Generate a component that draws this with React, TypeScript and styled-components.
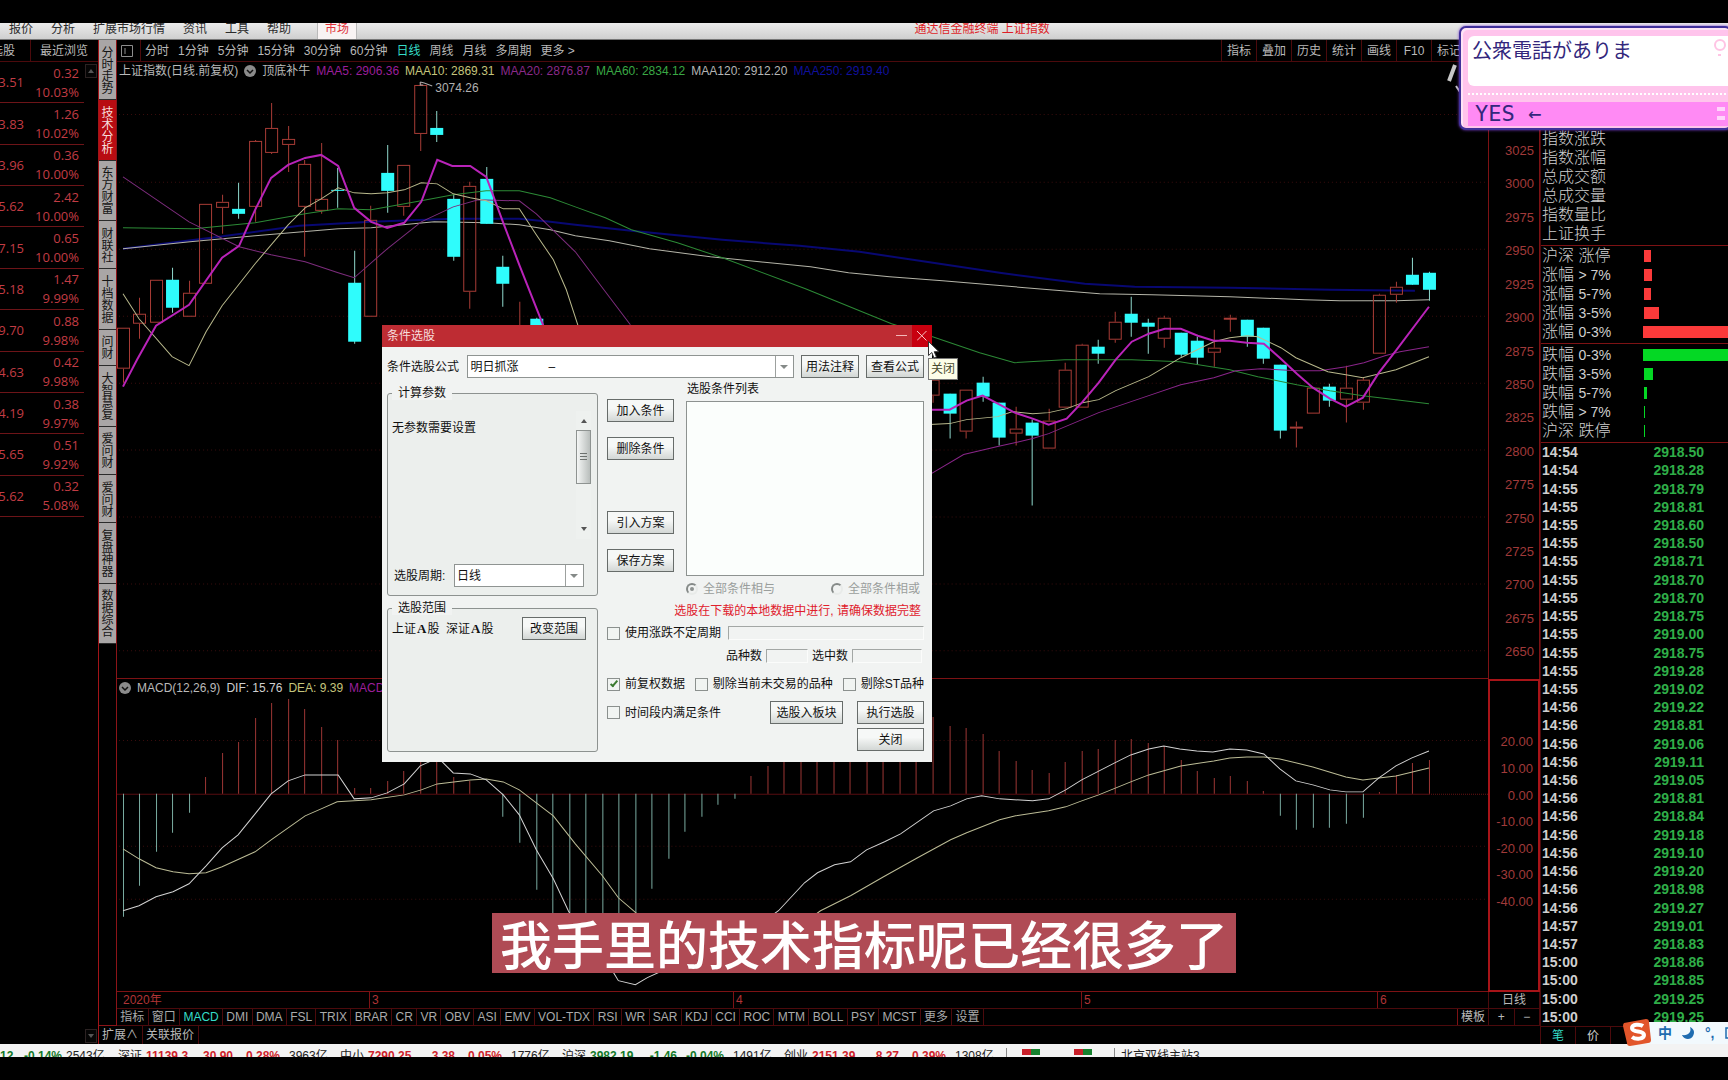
import React from "react";
import styled, { createGlobalStyle, css } from "styled-components";

const sans = `"Liberation Sans", "Noto Sans CJK SC", sans-serif`;
const line = "#7d1214";
const dimLine = "#4c0a0c";
const cyan = "#2ffcfc";

const Global = createGlobalStyle`
  *, *::before, *::after { box-sizing: border-box; }
  body { margin: 0; background: #000; }
  button, select, input { font: inherit; color: inherit; margin: 0; }
`;

const Page = styled.div`
  position: relative;
  display: flex;
  flex-direction: column;
  height: 100vh;
  min-height: 1000px;
  padding: 23px 0;
  overflow: hidden;
  background: #000;
  color: #b9b9b9;
  font: 12px/16px ${sans};
  white-space: nowrap;
`;

const MenuBar = styled.header`
  flex: none;
  display: flex;
  align-items: flex-end;
  height: 17px;
  padding-right: 121px;
  overflow: hidden;
  background: linear-gradient(#ebebeb, #cfcfcf);
  border-bottom: 1px solid #777;
  color: #2b2b2b;
`;
const MenuItems = styled.nav`
  display: flex;
  gap: 18px;
  padding: 0 26px 2px 9px;
`;
const PlainButton = styled.button`
  border: 0;
  padding: 0;
  background: none;
  line-height: 16px;
`;
const MarketTab = styled(PlainButton)`
  padding: 0 7px 2px;
  background: #f8f3f3;
  border: solid #b9b9b9;
  border-width: 0 1px;
  color: #e0323a;
`;
const WindowTitle = styled.div`
  flex: 1;
  padding-bottom: 2px;
  text-align: center;
  color: #dd1f28;
`;

const Main = styled.main`
  flex: 1;
  min-height: 0;
  display: flex;
`;

const ListPanel = styled.section`
  flex: none;
  width: 98px;
  display: flex;
  flex-direction: column;
`;
const ListTabs = styled.div`
  flex: none;
  display: flex;
  height: 22px;
  overflow: hidden;
  border-bottom: 1px solid ${dimLine};
`;
const ListTab = styled(PlainButton)<{ $w: number }>`
  width: ${(p) => p.$w}px;
  display: flex;
  justify-content: flex-end;
  align-items: center;
  padding-right: ${(p) => (p.$w > 40 ? 10 : 15)}px;
  border-right: ${(p) => (p.$w > 40 ? "0" : `1px solid ${dimLine}`)};
`;
const ListBody = styled.div`
  flex: 1;
  display: flex;
  justify-content: space-between;
  align-items: flex-start;
`;
const StockTable = styled.table`
  width: 84px;
  height: 455px;
  border-collapse: collapse;
  table-layout: fixed;
  font: 13px/19px "Open Sans", sans-serif;
  color: #c23c44;
  td { padding: 1px 5px 0 0; text-align: right; border-bottom: 1px solid #6d1418; }
  td:first-child { width: 29px; direction: rtl; overflow: hidden; }
`;
const ScrollCol = styled.div`
  display: flex;
  flex-direction: column;
  justify-content: space-between;
  height: 100%;
  width: 12px;
  margin-right: 1px;
  padding: 2px 0 1px;
`;
const ScrollStep = styled.button<{ $down?: boolean }>`
  display: grid;
  place-items: center;
  width: 12px;
  height: 14px;
  padding: 0;
  background: #050505;
  border: 1px solid #2b2222;
  &::before {
    content: "";
    border: 3px solid transparent;
    ${(p) => (p.$down ? "border-top: 4px solid #555; border-bottom: 0;" : "border-bottom: 4px solid #555; border-top: 0;")}
  }
`;

const Center = styled.section`
  flex: 1;
  min-width: 0;
  display: flex;
  flex-direction: column;
  border-left: 1px solid #a01418;
`;
const Upper = styled.div`
  flex: 1;
  min-height: 0;
  display: flex;
`;
const SideTabs = styled.nav`
  flex: none;
  width: 18px;
  border-right: 1px solid #8c1418;
  border-bottom: 1px solid #8c1418;
`;
const SideTabList = styled.div`
  display: flex;
  flex-direction: column;
  height: 604px;
`;
const SideTab = styled.button<{ $on?: boolean }>`
  flex: 1 1 auto;
  width: 17px;
  padding: 4px 0;
  border: 0;
  border-bottom: 1px solid #2b2b2b;
  background: ${(p) => (p.$on ? "#b80c12" : "#a9a6a6")};
  color: ${(p) => (p.$on ? "#f6dede" : "#151515")};
  writing-mode: vertical-rl;
  text-orientation: upright;
  text-align: center;
  font-family: "Noto Sans CJK SC", sans-serif;
  line-height: 17px;
`;

const ChartArea = styled.div`
  flex: 1;
  min-width: 0;
  display: flex;
  flex-direction: column;
`;
const Toolbar = styled.div`
  flex: none;
  display: flex;
  align-items: center;
  height: 22px;
  border-bottom: 1px solid ${dimLine};
`;
const PaneToggle = styled.button`
  display: grid;
  place-items: center;
  width: 24px;
  height: 21px;
  padding: 0 3px 0 0;
  background: none;
  border: 0;
  border-right: 1px solid ${dimLine};
  color: #8d8d8d;
`;
const Periods = styled.div`
  display: flex;
  gap: 9px;
  padding-left: 4px;
  flex: 1;
`;
const Period = styled(PlainButton)<{ $on?: boolean }>`
  ${(p) => p.$on && css`color: #35dcc8;`}
`;
const Tools = styled.div`
  display: flex;
  align-self: stretch;
  padding-right: 74px;
`;
const Tool = styled.button`
  width: 35px;
  padding: 0;
  background: none;
  border: 0;
  border-left: 1px solid ${dimLine};
`;

const PaneRow = styled.div<{ $grow: number }>`
  flex: ${(p) => p.$grow} 1 0;
  min-height: 0;
  display: flex;
`;
const Pane = styled.div`
  flex: 1;
  min-width: 0;
  display: grid;
  grid-template: minmax(0, 1fr) / minmax(0, 1fr);
  border-bottom: 1px solid ${line};
  > * { grid-area: 1 / 1; }
`;
const Drawing = styled.svg`
  display: block;
  width: 100%;
  height: 100%;
`;
const Legend = styled.div`
  display: flex;
  align-self: start;
  align-items: center;
  gap: 6px;
  padding: 1px 2px;
`;
const Tone = styled.span<{ $c: string }>`
  color: ${(p) => p.$c};
`;
const Axis = styled.div<{ $bright?: boolean; $top: number; $bottom: number }>`
  flex: none;
  width: 52px;
  display: flex;
  flex-direction: column;
  justify-content: space-between;
  padding: ${(p) => p.$top}px 5px ${(p) => p.$bottom}px 0;
  border: solid ${(p) => (p.$bright ? "#a81418" : line)};
  border-width: ${(p) => (p.$bright ? "2px" : "0 1px")};
  text-align: right;
  font-size: 13px;
  line-height: 14px;
  color: #a03a3a;
`;

const DateRow = styled.div`
  flex: none;
  display: flex;
  height: 17px;
  border-bottom: 1px solid ${dimLine};
`;
const Months = styled.div`
  flex: 1;
  display: grid;
  grid-template-columns: 252fr 364fr 348fr 296fr 111fr;
  color: #b03436;
`;
const Month = styled.span`
  padding-left: 2px;
  border-left: 1px solid ${line};
  &:first-child { padding-left: 6px; border: 0; }
`;
const AxisCell = styled.div`
  flex: none;
  width: 52px;
  display: flex;
  justify-content: center;
  border: solid ${dimLine};
  border-width: 0 1px;
`;
const IndicatorRow = styled.div`
  flex: none;
  display: flex;
  justify-content: space-between;
  height: 17px;
  border-bottom: 1px solid ${dimLine};
`;
const Indicators = styled.div`
  display: flex;
  width: 867px;
  margin-right: auto;
`;
const Indicator = styled(PlainButton)<{ $on?: boolean }>`
  flex: 1 1 auto;
  padding: 0 2px;
  border-right: 1px solid ${dimLine};
  color: ${(p) => (p.$on ? "#35dcc8" : "#aaa")};
`;
const TemplateButton = styled(PlainButton)`
  padding: 0 3px;
  border-left: 1px solid ${line};
`;
const ZoomButton = styled(PlainButton)`
  flex: 1;
  & + & { border-left: 1px solid ${dimLine}; }
`;
const FootRow = styled.div`
  flex: none;
  display: flex;
  height: 18px;
`;
const FootTab = styled(PlainButton)`
  padding: 0 4px 0 3px;
  border-right: 1px solid ${dimLine};
`;

const Quote = styled.aside`
  flex: none;
  width: 188px;
  display: flex;
  flex-direction: column;
  border-left: 1px solid ${dimLine};
  color: #cfcfcf;
`;
const StatBlock = styled.div<{ $top?: number }>`
  flex: none;
  padding: ${(p) => p.$top ?? 0}px 0 2px 1px;
  border-bottom: 1px solid ${line};
  font: 300 16px/19px ${sans};
`;
const StatRow = styled.div`
  display: flex;
  align-items: center;
  height: 19px;
`;
const StatName = styled.span`
  width: 102px;
  b { font-size: 14px; }
`;
const Bar = styled.span<{ $w: number; $c: string }>`
  width: ${(p) => p.$w}px;
  height: 12px;
  background: ${(p) => p.$c};
`;
const Ticks = styled.table`
  flex: 1;
  width: 163px;
  border-collapse: collapse;
  font: bold 14px/18px ${sans};
  td { padding: 0 0 0 1px; }
  td:last-child { text-align: right; color: #2fae48; }
`;
const QuoteTabs = styled.div`
  flex: none;
  display: flex;
  height: 18px;
  border-top: 1px solid ${dimLine};
`;
const QuoteTab = styled(PlainButton)<{ $on?: boolean }>`
  width: 35px;
  border-right: 1px solid ${dimLine};
  ${(p) => p.$on && css`color: #35dcc8;`}
`;

const StatusBar = styled.footer`
  flex: none;
  display: flex;
  align-items: flex-start;
  height: 13px;
  padding-top: 4px;
  overflow: hidden;
  background: #f3f3f3;
  color: #222;
`;
const FirstIndex = styled.div`
  flex: none;
  display: grid;
  grid-template-columns: 11px 51px 56px;
  text-align: right;
  span:last-child { padding-left: 4px; text-align: left; }
`;
const IndexQuote = styled.div`
  flex: none;
  display: grid;
  grid-template-columns: 28px 47px 40px 47px 60px;
  b:nth-of-type(n + 2) { text-align: right; }
  span:last-child { padding-left: 9px; }
`;
const Move = styled.b<{ $up?: boolean }>`
  color: ${(p) => (p.$up ? "#cf1f2c" : "#137a2a")};
`;
const Lights = styled.div`
  flex: none;
  display: flex;
  gap: 34px;
  width: 109px;
  height: 16px;
  padding: 1px 0 0 15px;
  border: solid #8a8a8a;
  border-width: 0 1px;
`;
const Light = styled.span`
  width: 18px;
  height: 6px;
  background: linear-gradient(90deg, #c9202a 50%, #16812e 50%);
`;
const Server = styled.span`
  padding-left: 6px;
`;

const Dialog = styled.section`
  position: absolute;
  left: 382px;
  top: 325px;
  width: 550px;
  background: #f1f3f2;
  color: #111;
  line-height: 14px;
`;
const DialogHead = styled.header`
  display: flex;
  align-items: center;
  height: 22px;
  padding-left: 5px;
  background: #be2c33;
  color: #f6dcdc;
  h2 { flex: 1; margin: 0; font: 12px/16px ${sans}; }
`;
const HeadButton = styled.button<{ $close?: boolean }>`
  display: grid;
  place-items: center;
  width: 20px;
  height: 22px;
  padding: 0;
  border: 0;
  background: ${(p) => (p.$close ? "#c8000f" : "none")};
`;
const DialogBody = styled.div`
  padding: 8px 8px 10px 5px;
`;
const FormulaRow = styled.div`
  display: flex;
  align-items: center;
  gap: 7px;
  > label { width: 74px; }
`;
const SelectBox = styled.span<{ $w: number }>`
  position: relative;
  display: block;
  width: ${(p) => p.$w}px;
  height: 23px;
  background: #fff;
  border: 1px solid #8f9492;
  select {
    width: 100%;
    height: 100%;
    padding: 0 2px;
    appearance: none;
    border: 0;
    background: none;
  }
  &::after {
    content: "";
    position: absolute;
    right: 5px;
    top: 9px;
    border: 4px solid transparent;
    border-top-color: #858a88;
    border-bottom: 0;
  }
  &::before {
    content: "";
    position: absolute;
    right: 17px;
    top: 0;
    bottom: 0;
    border-left: 1px solid #9da19f;
  }
`;
const PushButton = styled.button<{ $w: number }>`
  flex: none;
  width: ${(p) => p.$w}px;
  height: 23px;
  padding: 0;
  border: 1px solid #676c6a;
  background: linear-gradient(#f6f8f7 40%, #d3d7d5);
  line-height: 14px;
`;
const Columns = styled.div`
  display: flex;
  justify-content: space-between;
  margin-top: 8px;
`;
const LeftColumn = styled.div`
  width: 211px;
  display: flex;
  flex-direction: column;
  gap: 5px;
`;
const Group = styled.fieldset<{ $h: number }>`
  height: ${(p) => p.$h}px;
  margin: 0;
  padding: 0 6px 0 4px;
  border: 1px solid #8d9290;
  border-radius: 3px;
  background: #ecefed;
  legend { margin-left: 0; padding: 0 6px; line-height: 14px; background: #f1f3f2; }
`;
const ParamArea = styled.div`
  display: flex;
  justify-content: space-between;
  height: 128px;
  margin-top: 11px;
  p { margin: 10px 0 0; }
`;
const ParamScroll = styled.div`
  display: flex;
  flex-direction: column;
  align-items: center;
  width: 15px;
  background: #eef1ef;
`;
const Thumb = styled.span`
  width: 15px;
  height: 56px;
  margin-bottom: 36px;
  display: grid;
  place-items: center;
  border: 1px solid #8e9391;
  background: linear-gradient(90deg, #f4f6f5, #b9bebc);
  &::before { content: ""; width: 7px; height: 8px; background: repeating-linear-gradient(#6c716f 0 1px, transparent 1px 3px); }
`;
const Step = styled(ScrollStep)`
  width: 15px;
  height: 20px;
  border: 0;
  background: none;
`;
const PeriodRow = styled.div`
  display: flex;
  align-items: center;
  justify-content: space-between;
  margin-top: 25px;
  padding: 0 7px 0 2px;
`;
const RangeRow = styled.div`
  display: flex;
  justify-content: space-between;
  align-items: center;
  margin-top: 2px;
  padding-right: 5px;
  b { padding: 0 1px; font: bold 13px/14px "Liberation Serif", serif; }
`;
const RightColumn = styled.div`
  width: 317px;
  margin-top: -4px;
`;
const Conditions = styled.div`
  display: flex;
  justify-content: space-between;
`;
const Actions = styled.div`
  display: flex;
  flex-direction: column;
  gap: 15px;
  padding-top: 17px;
  > :nth-child(3) { margin-top: 36px; }
`;
const ConditionList = styled.div`
  width: 238px;
  h3 { margin: 0 0 5px 1px; font: 12px/14px ${sans}; }
`;
const ListBox = styled.div`
  height: 175px;
  background: #fbfefc;
  border: 1px solid #8d9290;
`;
const Line = styled.div<{ $mt: number }>`
  display: flex;
  align-items: center;
  justify-content: space-between;
  margin-top: ${(p) => p.$mt}px;
`;
const Joins = styled(Line)`
  padding: 0 4px 0 79px;
  color: #9a9e9c;
`;
const Warning = styled.p`
  margin: 8px 3px 0 0;
  text-align: right;
  color: #e0202c;
`;
const Choice = styled.label`
  display: flex;
  align-items: center;
  gap: 5px;
  height: 14px;
`;
const Tick = styled.input.attrs({ type: "checkbox" })`
  appearance: none;
  width: 13px;
  height: 13px;
  border: 1px solid #8b908e;
  background: #f1f4f2;
  display: grid;
  place-items: center;
  &:checked::before {
    content: "";
    width: 4px;
    height: 8px;
    margin-bottom: 3px;
    border: solid #3a7a2f;
    border-width: 0 2px 2px 0;
    transform: rotate(40deg);
  }
`;
const Radio = styled.input.attrs({ type: "radio" })`
  appearance: none;
  width: 12px;
  height: 12px;
  border: 2px solid;
  border-color: #858a88 #e8ebe9 #e8ebe9 #858a88;
  border-radius: 50%;
  display: grid;
  place-items: center;
  &:checked::before { content: ""; width: 4px; height: 4px; border-radius: 50%; background: #8d9290; }
`;
const Sunken = styled.output<{ $w: number }>`
  width: ${(p) => p.$w}px;
  height: 14px;
  border: 1px solid;
  border-color: #a3a7a5 #fbfcfb #fbfcfb #a3a7a5;
`;
const EndLine = styled(Line)<{ $gap: number }>`
  justify-content: flex-end;
  gap: ${(p) => p.$gap}px;
  > :first-child:not(:only-child) { margin-right: auto; }
`;
const Counts = styled(Line)`
  justify-content: flex-end;
  gap: 4px;
  padding-right: 2px;
`;

const Tip = styled.div`
  position: absolute;
  left: 928px;
  top: 358px;
  padding: 2px 2px;
  border: 1px solid #777;
  background: #fdfde8;
  color: #4a4a30;
`;
const Cursor = styled.svg`
  position: absolute;
  left: 928px;
  top: 341px;
`;
const Caption = styled.div`
  position: absolute;
  left: 50%;
  bottom: 107px;
  transform: translateX(-50%);
  padding: 0 8px;
  background: #b04b55;
  color: #fff;
  font: 500 52px/60px "Noto Sans CJK SC", sans-serif;
`;
const Watermark = styled.svg`
  position: absolute;
  right: 268px;
  top: 64px;
`;
const PhoneCard = styled.section`
  position: absolute;
  right: -4px;
  top: 26px;
  width: 273px;
  height: 104px;
  padding: 8px 0 3px 7px;
  border: 2px solid #40309a;
  border-radius: 7px;
  background: #ffc4ec;
  box-shadow: inset 2px 2px 0 #fde3f6, 0 0 3px #7a3fd0;
  color: #33277c;
`;
const PhoneText = styled.div`
  display: flex;
  justify-content: space-between;
  height: 50px;
  padding: 0 4px 0 4px;
  border-radius: 6px 0 0 6px;
  background: #fff;
  font: 20px/28px "Noto Sans CJK JP", sans-serif;
`;
const Dots = styled.div`
  height: 16px;
  display: flex;
  align-items: center;
  &::before { content: ""; flex: 1; border-top: 2px dotted #fff; }
`;
const YesButton = styled.button`
  display: flex;
  align-items: center;
  justify-content: space-between;
  width: 100%;
  height: 24px;
  padding: 0 5px 0 7px;
  border: 0;
  background: #ff8af4;
  font: 22px/24px "DejaVu Sans Mono", monospace;
`;
const Pips = styled.span`
  width: 8px;
  height: 14px;
  background: repeating-linear-gradient(#ffd5fb 0 4px, transparent 4px 9px);
`;
const ImeBar = styled.div`
  position: absolute;
  right: 0;
  bottom: 36px;
  display: flex;
  align-items: center;
  gap: 10px;
  width: 92px;
  height: 22px;
  padding-left: 22px;
  background: #f2f9fd;
  color: #1f6cb0;
  font-weight: bold;
  font-size: 14px;
  > * { flex: none; }
`;
const ImeLogo = styled.svg`
  position: absolute;
  left: -14px;
  top: -5px;
`;

type Candle = [number, number, number, number, number, number];
// index, falling flag, high, body top, body bottom, low
const candles: Candle[] = [
  [0,0,328,328,369,383],[1,0,298,314,324,339],[2,0,280,280,323,323],[3,1,268,280,308,313],[4,0,281,293,317,317],
  [5,0,204,204,284,284],[6,0,195,202,208,234],[7,1,183,209,214,219],[8,0,140,141,207,222],[9,0,103,128,153,154],
  [10,0,126,139,145,172],[11,0,160,164,207,257],[12,0,143,199,211,214],[13,1,168,190,191,208],[14,1,251,283,342,344],
  [15,0,206,220,317,317],[16,1,145,173,191,213],[17,0,165,165,207,216],[18,0,83,85,134,151],[19,1,111,128,135,142],
  [20,1,195,199,257,261],[21,0,182,186,292,309],[22,1,167,179,224,224],[23,1,256,267,284,307],[24,0,302,330,350,350],
  [25,1,318,319,340,345],[49,0,380,380,396,403],[50,1,394,394,414,439],[51,0,390,390,432,439],[52,1,377,383,397,402],
  [53,1,403,403,438,446],[54,0,407,429,434,446],[55,1,420,423,436,506],[56,0,409,421,449,449],[57,0,363,370,408,408],
  [58,0,344,345,408,408],[59,1,340,347,354,364],[60,0,312,322,340,343],[61,1,297,314,323,337],[62,1,319,323,327,354],
  [63,0,316,318,339,348],[64,1,333,333,355,357],[65,1,337,341,358,365],[66,0,330,348,353,367],[67,0,315,318,319,332],
  [68,1,320,320,337,347],[69,1,328,328,359,364],[70,1,365,365,431,439],[71,0,422,427,429,448],[72,0,388,388,414,414],
  [73,1,384,387,401,407],[74,0,366,388,400,423],[75,0,378,380,403,410],[76,0,294,295,354,354],[77,0,282,287,295,303],
  [78,1,258,275,285,285],[79,1,272,273,290,301],
];
const xAt = (i: number) => 124.5 + i * 16.52;

const ma5a = "124,387 138,360 157,326 190,305 223,258 240,246 256,210 272,178 289,165 306,158 322,155 339,166 355,208 372,222 388,228 405,223 422,202 438,160 453,166 471,166 487,177 504,223 520,265 544,326";
const ma5b = "930,410 950,410 967,401 983,396 1000,405 1015,413 1033,419 1049,425 1067,419 1083,402 1099,383 1116,360 1132,342 1149,334 1165,329 1181,329 1198,336 1214,341 1230,341 1247,343 1264,344 1281,359 1297,374 1313,388 1330,399 1346,407 1363,398 1379,373 1396,351 1429,307";
const ma10a = "124,294 140,319 173,357 190,366 207,332 223,306 256,264 289,225 306,208 322,199 339,188 355,193 372,194 388,193 405,190 422,183 438,184 454,194 471,198 487,201 504,209 520,209 537,235 554,260 567,290 580,330";
const ma10b = "930,425 950,424 967,420 998,417 1013,412 1033,414 1049,413 1067,409 1083,403 1099,400 1116,391 1149,377 1181,358 1214,342 1230,338 1247,336 1258,337 1281,348 1296,358 1328,372 1346,375 1363,378 1396,370 1429,357";
const ma20a = "124,177 190,222 240,247 272,255 306,262 339,273 355,278 388,249 422,222 454,207 479,200 520,201 537,214 576,252 600,284 631,325";
const ma20b = "930,475 964,455 998,447 1033,439 1049,434 1099,413 1149,396 1181,385 1214,378 1236,371 1261,369 1297,371 1320,371 1346,367 1364,363 1385,356 1400,352 1429,347";
const ma60 = "124,228 195,229 256,223 306,214 339,209 372,210 422,201 454,195 487,191 520,191 551,198 576,207 606,218 632,230 678,243 723,258 806,289 892,324 933,337 980,353 1015,363 1065,360 1132,360 1180,362 1230,370 1258,377 1297,385 1330,391 1363,396 1396,400 1429,404";
const ma120 = "124,249 191,242 256,236 339,229 372,228 435,222 488,223 520,225 551,230 576,236 610,241 650,249 711,257 760,262 811,267 849,273 890,277 943,281 991,285 1050,290 1100,294 1152,295 1230,297 1305,300 1340,301 1396,301 1429,300";
const ma250 = "124,249 220,237 300,226 372,222 454,219 520,219 551,222 576,225 632,231 723,240 800,246 860,252 920,261 1000,273 1085,284 1135,287 1230,288 1330,290 1415,291";

const macdEnds: (number | null)[] = [
  918,887,853,834,814,778,754,743,719,704,700,710,728,741,789,789,782,772,755,755,
  778,782,null,818,844,891,940,940,940,940,940,940,890,860,833,818,806,800,777,767,
  755,750,745,740,735,730,728,725,720,718,727,729,735,752,762,771,774,763,752,750,
  741,740,744,747,761,772,779,777,782,792,817,831,829,829,825,819,793,776,764,761,
];
const dif = "124,912 140,907 157,898 174,893 190,885 207,867 223,849 239,836 256,815 272,795 289,782 306,776 339,776 355,800 372,799 388,794 405,785 421,767 430,763 438,758 443,763 454,774 471,775 487,781 504,796 520,816 537,851 554,880 569,912 590,950 613,972 619,982 636,986 648,979 663,972 720,955 779,912 805,884 818,874 835,866 851,863 867,851 885,843 901,835 934,812 951,807 967,800 982,797 1000,800 1033,802 1049,800 1066,791 1082,781 1115,764 1131,756 1149,750 1164,747 1180,750 1197,752 1213,753 1230,750 1247,751 1264,755 1280,770 1296,782 1313,786 1330,791 1346,793 1363,793 1379,779 1396,767 1412,759 1429,752";
const dea = "124,850 140,860 157,869 174,873 190,875 207,874 223,868 256,853 272,841 306,817 322,810 338,803 372,801 405,796 422,791 438,785 471,781 487,780 504,783 520,791 537,804 554,817 576,845 603,877 619,899 634,912 660,935 720,950 790,935 821,912 835,905 851,897 884,878 918,859 951,841 967,834 1000,821 1016,817 1049,812 1066,808 1082,802 1099,796 1131,783 1149,776 1181,767 1214,762 1230,759 1247,758 1264,758 1280,760 1313,768 1346,778 1363,781 1379,779 1396,777 1429,769";

const stocks = [
  ["3.51","0.32","10.03%"],["3.83","1.26","10.02%"],["3.96","0.36","10.00%"],["5.62","2.42","10.00%"],
  ["7.15","0.65","10.00%"],["5.18","1.47","9.99%"],["9.70","0.88","9.98%"],["4.63","0.42","9.98%"],
  ["4.19","0.38","9.97%"],["5.65","0.51","9.92%"],["5.62","0.32","5.08%"],
];
const sideTabs = ["分时走势","技术分析","东方财富","财联社","十档数据","问财","大智慧复","爱问财","爱问财","复盘神器","数据综合"];
const periods = ["分时","1分钟","5分钟","15分钟","30分钟","60分钟","日线","周线","月线","多周期","更多 >"];
const tools = ["指标","叠加","历史","统计","画线","F10","标记"];
const prices = [3025,3000,2975,2950,2925,2900,2875,2850,2825,2800,2775,2750,2725,2700,2675,2650];
const levels = ["20.00","10.00","0.00","-10.00","-20.00","-30.00","-40.00"];
const indicators = ["指标","窗口","MACD","DMI","DMA","FSL","TRIX","BRAR","CR","VR","OBV","ASI","EMV","VOL-TDX","RSI","WR","SAR","KDJ","CCI","ROC","MTM","BOLL","PSY","MCST","更多","设置"];
const ticks = [
  ["14:54","2918.50"],["14:54","2918.28"],["14:55","2918.79"],["14:55","2918.81"],["14:55","2918.60"],["14:55","2918.50"],
  ["14:55","2918.71"],["14:55","2918.70"],["14:55","2918.70"],["14:55","2918.75"],["14:55","2919.00"],["14:55","2918.75"],
  ["14:55","2919.28"],["14:55","2919.02"],["14:56","2919.22"],["14:56","2918.81"],["14:56","2919.06"],["14:56","2919.11"],
  ["14:56","2919.05"],["14:56","2918.81"],["14:56","2918.84"],["14:56","2919.18"],["14:56","2919.10"],["14:56","2919.20"],
  ["14:56","2918.98"],["14:56","2919.27"],["14:57","2919.01"],["14:57","2918.83"],["15:00","2918.86"],["15:00","2918.85"],
  ["15:00","2919.25"],["15:00","2919.25"],
];
const rises: [string, string, number][] = [["沪深 涨停","",7],["涨幅","> 7%",8],["涨幅","5-7%",7],["涨幅","3-5%",15],["涨幅","0-3%",85]];
const falls: [string, string, number][] = [["跌幅","0-3%",85],["跌幅","3-5%",9],["跌幅","5-7%",3],["跌幅","> 7%",1],["沪深 跌停","",1]];
const indexes: [string, string, string, string, string, boolean][] = [
  ["深证","11139.3","30.90","0.28%","3963亿",true],
  ["中小","7290.25","3.38","0.05%","1776亿",true],
  ["沪深","3982.19","-1.46","-0.04%","1491亿",false],
  ["创业","2151.39","8.27","0.39%","1308亿",true],
];

const Collapse = () => (
  <svg width="12" height="12" viewBox="0 0 12 12">
    <circle cx="6" cy="6" r="6" fill="#8b8b8b" />
    <path d="M3 5l3 3 3-3" fill="none" stroke="#111" strokeWidth="1.5" />
  </svg>
);

const PriceChart = () => (
  <Drawing viewBox="118 62 1370 617" preserveAspectRatio="none">
    {[114, 182, 249, 316, 383, 450, 517, 584, 651].map((y) => (
      <path key={y} d={`M120 ${y}.5H1488`} stroke="#3a0d0d" strokeDasharray="1 3" />
    ))}
    <g fill="none">
      <polyline points={ma250} stroke="#080872" strokeWidth="2" />
      <polyline points={ma120} stroke="#b4b4a8" />
    </g>
    {candles.map(([i, down, high, top, bottom, low]) => {
      const x = Math.round(xAt(i));
      return down ? (
        <g key={i} fill={cyan}>
          <path d={`M${x - 0.5} ${high}V${low}`} stroke="#8fd8cc" />
          <rect x={x - 7} y={top} width="13" height={Math.max(1, bottom - top)} />
        </g>
      ) : (
        <g key={i} fill="none" stroke="#a83c36">
          <path d={`M${x - 0.5} ${high}V${top}M${x - 0.5} ${bottom}V${low}`} />
          <rect x={x - 6.5} y={top + 0.5} width="12" height={Math.max(1, bottom - top - 1)} />
        </g>
      );
    })}
    <g fill="none">
      <polyline points={ma60} stroke="#2c8a36" />
      <polyline points={ma20a} stroke="#7d2c7d" />
      <polyline points={ma20b} stroke="#8a258a" />
      <polyline points={ma10a} stroke="#b9b98c" />
      <polyline points={ma10b} stroke="#b9b98c" />
      <polyline points={ma5a} stroke="#b923b9" strokeWidth="2" />
      <polyline points={ma5b} stroke="#b923b9" strokeWidth="2" />
      <path d="M421 82l4 1 8 3M421 82v3h3" stroke="#aaa" />
    </g>
    <text x="436" y="92" fill="#b0b0b0" fontSize="12">3074.26</text>
  </Drawing>
);

const MacdChart = () => (
  <Drawing viewBox="118 680 1370 312" preserveAspectRatio="none">
    {[741, 847, 900].map((y) => (
      <path key={y} d={`M120 ${y}.5H1488`} stroke="#3a0d0d" strokeDasharray="1 3" />
    ))}
    <path d="M118 795.5H1429" stroke="#570d10" />
    <path d="M1429 795.5H1488" stroke="#6a1214" strokeDasharray="1 1" />
    {macdEnds.map((y, i) =>
      y === null ? null : (
        <path key={i} d={`M${Math.round(xAt(i)) - 0.5} 795V${y}`} stroke={y < 795 ? "#9c3634" : "#79aba0"} />
      )
    )}
    <polyline points={dea} fill="none" stroke="#bcbc96" />
    <polyline points={dif} fill="none" stroke="#d2d2d2" />
  </Drawing>
);

const FormulaDialog = () => (
  <Dialog role="dialog" aria-label="条件选股">
    <DialogHead>
      <h2>条件选股</h2>
      <HeadButton aria-label="最小化">
        <svg width="12" height="10"><path d="M0 4.500H11" stroke="#f3b9b9" /></svg>
      </HeadButton>
      <HeadButton $close aria-label="关闭窗口">
        <svg width="10" height="10"><path d="M0 0l9.500 9.500M9.500 0L0 9.500" stroke="#f8c4c4" /></svg>
      </HeadButton>
    </DialogHead>
    <DialogBody>
      <FormulaRow>
        <label htmlFor="formula">条件选股公式</label>
        <SelectBox $w={329}>
          <select id="formula"><option>{"明日抓涨" + "\u00a0".repeat(9) + "–"}</option></select>
        </SelectBox>
        <PushButton $w={58}>用法注释</PushButton>
        <PushButton $w={58}>查看公式</PushButton>
      </FormulaRow>
      <Columns>
        <LeftColumn>
          <Group $h={210}>
            <legend>计算参数</legend>
            <ParamArea>
              <p>无参数需要设置</p>
              <ParamScroll>
                <Step aria-label="向上" />
                <Thumb />
                <Step $down aria-label="向下" />
              </ParamScroll>
            </ParamArea>
            <PeriodRow>
              <label htmlFor="cycle">选股周期:</label>
              <SelectBox $w={130}>
                <select id="cycle"><option>日线</option></select>
              </SelectBox>
            </PeriodRow>
          </Group>
          <Group $h={151}>
            <legend>选股范围</legend>
            <RangeRow>
              <span>上证<b>A</b>股&nbsp; 深证<b>A</b>股</span>
              <PushButton $w={64}>改变范围</PushButton>
            </RangeRow>
          </Group>
        </LeftColumn>
        <RightColumn>
          <Conditions>
            <Actions>
              <PushButton $w={67}>加入条件</PushButton>
              <PushButton $w={67}>删除条件</PushButton>
              <PushButton $w={67}>引入方案</PushButton>
              <PushButton $w={67}>保存方案</PushButton>
            </Actions>
            <ConditionList>
              <h3>选股条件列表</h3>
              <ListBox />
            </ConditionList>
          </Conditions>
          <Joins $mt={6}>
            <Choice><Radio name="join" defaultChecked disabled />全部条件相与</Choice>
            <Choice><Radio name="join" disabled />全部条件相或</Choice>
          </Joins>
          <Warning>选股在下载的本地数据中进行, 请确保数据完整</Warning>
          <Line $mt={8}>
            <Choice><Tick />使用涨跌不定周期</Choice>
            <Sunken $w={196} />
          </Line>
          <Counts $mt={9}>
            <span>品种数</span><Sunken $w={42} /><span>选中数</span><Sunken $w={70} />
          </Counts>
          <Line $mt={14}>
            <Choice><Tick defaultChecked />前复权数据</Choice>
            <Choice><Tick />剔除当前未交易的品种</Choice>
            <Choice><Tick />剔除ST品种</Choice>
          </Line>
          <EndLine $mt={10} $gap={14}>
            <Choice><Tick />时间段内满足条件</Choice>
            <PushButton $w={73}>选股入板块</PushButton>
            <PushButton $w={67}>执行选股</PushButton>
          </EndLine>
          <EndLine $mt={4} $gap={0}>
            <PushButton $w={67}>关闭</PushButton>
          </EndLine>
        </RightColumn>
      </Columns>
    </DialogBody>
  </Dialog>
);

const Stats = ({ rows, color }: { rows: [string, string, number][]; color: string }) => (
  <>
    {rows.map(([name, range, w]) => (
      <StatRow key={name + range}>
        <StatName>{name} <b>{range}</b></StatName>
        <Bar $w={w} $c={color} />
      </StatRow>
    ))}
  </>
);

export default function App() {
  return (
    <Page>
      <Global />
      <MenuBar>
        <MenuItems>
          {["报价", "分析", "扩展市场行情", "资讯", "工具", "帮助"].map((t) => <PlainButton key={t}>{t}</PlainButton>)}
        </MenuItems>
        <MarketTab>市场</MarketTab>
        <WindowTitle>通达信金融终端 上证指数</WindowTitle>
      </MenuBar>

      <Main>
        <ListPanel>
          <ListTabs>
            <ListTab $w={31}>选股</ListTab>
            <ListTab $w={67}>最近浏览</ListTab>
          </ListTabs>
          <ListBody>
            <StockTable>
              <tbody>
                {stocks.map(([price, change, pct], i) => (
                  <tr key={i}><td>{price}</td><td>{change}<br />{pct}</td></tr>
                ))}
              </tbody>
            </StockTable>
            <ScrollCol>
              <ScrollStep aria-label="上" />
              <ScrollStep $down aria-label="下" />
            </ScrollCol>
          </ListBody>
        </ListPanel>

        <Center>
          <Upper>
            <SideTabs>
              <SideTabList>
                {sideTabs.map((t, i) => <SideTab key={i} $on={i === 1}>{t}</SideTab>)}
              </SideTabList>
            </SideTabs>
            <ChartArea>
              <Toolbar>
                <PaneToggle aria-label="布局">
                  <svg width="12" height="12"><path d="M.5.5h11v11H.5zM4 3v6" fill="none" stroke="currentColor" /></svg>
                </PaneToggle>
                <Periods>
                  {periods.map((t) => <Period key={t} $on={t === "日线"}>{t}</Period>)}
                </Periods>
                <Tools>{tools.map((t) => <Tool key={t}>{t}</Tool>)}</Tools>
              </Toolbar>
              <PaneRow $grow={618}>
                <Pane>
                  <PriceChart />
                  <Legend>
                    <span>上证指数(日线.前复权)</span>
                    <Collapse />
                    <span>顶底补牛</span>
                    <Tone $c="#9a1f9a">MAA5: 2906.36</Tone>
                    <Tone $c="#c4c47c">MAA10: 2869.31</Tone>
                    <Tone $c="#8a2a8a">MAA20: 2876.87</Tone>
                    <Tone $c="#3aa845">MAA60: 2834.12</Tone>
                    <Tone $c="#b4b4b4">MAA120: 2912.20</Tone>
                    <Tone $c="#10109c">MAA250: 2919.40</Tone>
                  </Legend>
                </Pane>
                <Axis $top={82} $bottom={20}>{prices.map((p) => <span key={p}>{p}</span>)}</Axis>
              </PaneRow>
              <PaneRow $grow={313}>
                <Pane>
                  <MacdChart />
                  <Legend>
                    <Collapse />
                    <span>MACD(12,26,9)</span>
                    <Tone $c="#cfcfcf">DIF: 15.76</Tone>
                    <Tone $c="#c4c47c">DEA: 9.39</Tone>
                    <Tone $c="#9a1f9a">MACD: 12.74</Tone>
                  </Legend>
                </Pane>
                <Axis $bright $top={54} $bottom={81}>{levels.map((p) => <span key={p}>{p}</span>)}</Axis>
              </PaneRow>
              <DateRow>
                <Months>{["2020年", "3", "4", "5", "6"].map((m) => <Month key={m}>{m}</Month>)}</Months>
                <AxisCell>日线</AxisCell>
              </DateRow>
              <IndicatorRow>
                <Indicators>
                  {indicators.map((t) => <Indicator key={t} $on={t === "MACD"}>{t}</Indicator>)}
                </Indicators>
                <TemplateButton>模板</TemplateButton>
                <AxisCell><ZoomButton>+</ZoomButton><ZoomButton>−</ZoomButton></AxisCell>
              </IndicatorRow>
            </ChartArea>
          </Upper>
          <FootRow>
            <FootTab>扩展∧</FootTab>
            <FootTab>关联报价</FootTab>
          </FootRow>
        </Center>

        <Quote>
          <StatBlock $top={89}>
            {["指数涨跌", "指数涨幅", "总成交额", "总成交量", "指数量比", "上证换手"].map((t) => <StatRow key={t}>{t}</StatRow>)}
          </StatBlock>
          <StatBlock><Stats rows={rises} color="#fb3a3a" /></StatBlock>
          <StatBlock $top={1}><Stats rows={falls} color="#04d824" /></StatBlock>
          <Ticks>
            <tbody>
              {ticks.map(([time, price], i) => <tr key={i}><td>{time}</td><td>{price}</td></tr>)}
            </tbody>
          </Ticks>
          <QuoteTabs>
            <QuoteTab $on>笔</QuoteTab>
            <QuoteTab>价</QuoteTab>
          </QuoteTabs>
        </Quote>
      </Main>

      <StatusBar>
        <FirstIndex><Move>12</Move><Move>-0.14%</Move><span>2543亿</span></FirstIndex>
        {indexes.map(([name, value, change, pct, vol, up]) => (
          <IndexQuote key={name}>
            <span>{name}</span>
            <Move $up={up}>{value}</Move>
            <Move $up={up}>{change}</Move>
            <Move $up={up}>{pct}</Move>
            <span>{vol}</span>
          </IndexQuote>
        ))}
        <Lights><Light /><Light /></Lights>
        <Server>北京双线主站3</Server>
      </StatusBar>

      <FormulaDialog />
      <Tip role="tooltip">关闭</Tip>
      <Cursor width="12" height="18" viewBox="0 0 12 18">
        <path d="M.5.5v14l3.300-3 2.200 5.500 2.500-1-2.300-5.300h4.800z" fill="#fff" stroke="#333" />
      </Cursor>
      <Caption>我手里的技术指标呢已经很多了</Caption>
      <Watermark width="14" height="28" viewBox="0 0 14 28">
        <path d="M9 1L3 17" stroke="#c8c8c8" strokeWidth="4" fill="none" />
        <path d="M10 22l4 6" stroke="#c8c8c8" strokeWidth="2" />
      </Watermark>
      <PhoneCard>
        <PhoneText>
          <span>公衆電話がありま</span>
          <svg width="14" height="24" viewBox="0 0 14 24">
            <circle cx="8" cy="9" r="5" fill="none" stroke="#ffc4e4" strokeWidth="2" />
            <path d="M6 19h3" stroke="#ffc4e4" strokeWidth="2" />
          </svg>
        </PhoneText>
        <Dots />
        <YesButton><span>YES ←</span><Pips /></YesButton>
      </PhoneCard>
      <ImeBar>
        <ImeLogo width="30" height="30" viewBox="0 0 30 30">
          <path d="M2 6l22-4q3 0 3 3l2 18q0 3-3 3L8 29q-3 0-3-3L1 9q0-2 1-3z" fill="#e2552a" />
          <path d="M21 9c-3-2-11-2-11 2 0 5 12 2 12 7 0 4-8 5-12 2" fill="none" stroke="#fff" strokeWidth="4" />
        </ImeLogo>
        <span>中</span>
        <svg width="13" height="14" viewBox="0 0 13 14"><path d="M8 1c2 5-2 9-8 8 2 5 9 5 11 1s1-7-3-9z" fill="#1f6cb0" /></svg>
        <span>°,</span>
        <svg width="5" height="12" viewBox="0 0 5 12"><path d="M9 1H1v10h8M3 4h2M3 7h2" fill="none" stroke="#1f6cb0" strokeWidth="1.500" /></svg>
      </ImeBar>
    </Page>
  );
}
